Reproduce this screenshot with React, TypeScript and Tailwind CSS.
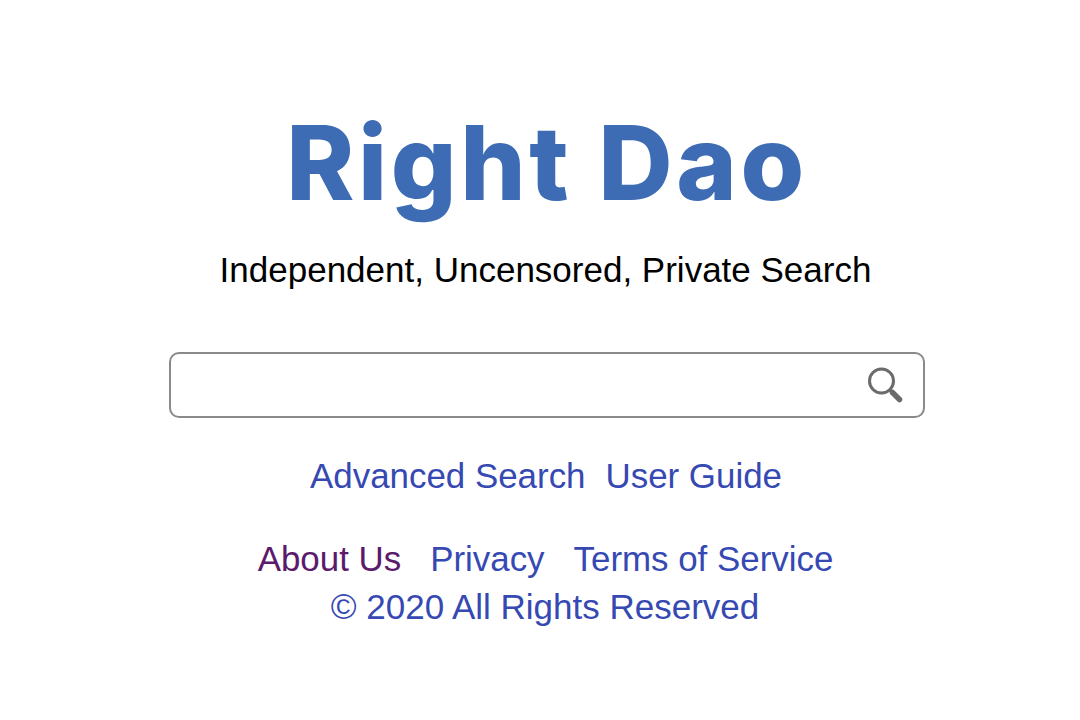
export default function App() {
  return (
    <div className="h-[720px] bg-white pl-[14px] flex flex-col items-center font-['Liberation_Sans',Arial,sans-serif] overflow-hidden">
      <h1 className="mt-[100px] h-[126px] text-[103px] leading-[126px] font-extrabold text-[#3d6cb5] font-['Inter',sans-serif] tracking-[3.6px]">Right Dao</h1>
      <p className="mt-[20px] mr-[3px] text-[35px] leading-[48px] text-black">Independent, Uncensored, Private Search</p>
      <div className="mt-[58px] w-[756px] h-[66px] border-2 border-[#8a8a8a] rounded-[10px] flex items-center justify-end pr-[19px]">
        <svg width="38" height="38" viewBox="0 0 38 38" fill="none" className="text-[#6b6b6b]">
          <circle cx="15.5" cy="15" r="12" stroke="currentColor" strokeWidth="3" />
          <path d="M24 24 L27 27" stroke="currentColor" strokeWidth="3" />
          <path d="M26.5 26.5 L33.5 33.5" stroke="currentColor" strokeWidth="5.5" strokeLinecap="round" />
        </svg>
      </div>
      <div className="mt-[36px] mr-[2px] flex gap-[20px] text-[34.9px] leading-[44px] text-[#3649b3]">
        <a>Advanced Search</a>
        <a>User Guide</a>
      </div>
      <div className="mt-[39px] mr-[3px] flex gap-[29px] text-[34.9px] leading-[44px] text-[#3649b3]">
        <a className="text-[#5b1a6b]">About Us</a>
        <a>Privacy</a>
        <a>Terms of Service</a>
      </div>
      <p className="mt-[4px] mr-[4px] text-[35px] leading-[44px] text-[#3649b3]">© 2020 All Rights Reserved</p>
    </div>
  )
}
